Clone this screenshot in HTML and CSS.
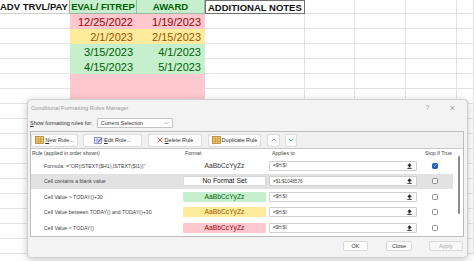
FILE: index.html
```html
<!DOCTYPE html>
<html lang="en">
<head>
    <meta charset="UTF-8">
    <meta name="viewport" content="width=device-width, initial-scale=1.0">
    <title>Conditional Formatting Rules Manager</title>
    <link rel="stylesheet" href="styles.css">
</head>
<body>
    <div class="sheet">
        <div class="row head">
            <div class="cell colA">ADV TRVL/PAY</div>
            <div class="cell hgreen">EVAL/ FITREP</div>
            <div class="cell hgreen">AWARD</div>
            <div class="cell notes">ADDITIONAL NOTES</div>
            <div class="cell"></div><div class="cell"></div><div class="cell"></div><div class="cell"></div>
        </div>
        <div class="row">
            <div class="cell colA"></div>
            <div class="cell date red">12/25/2022</div>
            <div class="cell date red">1/19/2023</div>
            <div class="cell"></div><div class="cell"></div><div class="cell"></div><div class="cell"></div><div class="cell"></div>
        </div>
        <div class="row">
            <div class="cell colA"></div>
            <div class="cell date yellow">2/1/2023</div>
            <div class="cell date yellow">2/15/2023</div>
            <div class="cell"></div><div class="cell"></div><div class="cell"></div><div class="cell"></div><div class="cell"></div>
        </div>
        <div class="row">
            <div class="cell colA"></div>
            <div class="cell date green">3/15/2023</div>
            <div class="cell date green">4/1/2023</div>
            <div class="cell"></div><div class="cell"></div><div class="cell"></div><div class="cell"></div><div class="cell"></div>
        </div>
        <div class="row">
            <div class="cell colA"></div>
            <div class="cell date green">4/15/2023</div>
            <div class="cell date green">5/1/2023</div>
            <div class="cell"></div><div class="cell"></div><div class="cell"></div><div class="cell"></div><div class="cell"></div>
        </div>
        <div class="row"><div class="cell colA"></div><div class="cell red"></div><div class="cell red"></div><div class="cell"></div><div class="cell"></div><div class="cell"></div><div class="cell"></div><div class="cell"></div></div>
        <div class="row"><div class="cell colA"></div><div class="cell red"></div><div class="cell red"></div><div class="cell"></div><div class="cell"></div><div class="cell"></div><div class="cell"></div><div class="cell"></div></div>
        <div class="row"><div class="cell colA"></div><div class="cell red"></div><div class="cell red"></div><div class="cell"></div><div class="cell"></div><div class="cell"></div><div class="cell"></div><div class="cell"></div></div>
        <div class="row"><div class="cell colA"></div><div class="cell red"></div><div class="cell red"></div><div class="cell"></div><div class="cell"></div><div class="cell"></div><div class="cell"></div><div class="cell"></div></div>
        <div class="row"><div class="cell colA"></div><div class="cell red"></div><div class="cell red"></div><div class="cell"></div><div class="cell"></div><div class="cell"></div><div class="cell"></div><div class="cell"></div></div>
        <div class="row"><div class="cell colA"></div><div class="cell red"></div><div class="cell red"></div><div class="cell"></div><div class="cell"></div><div class="cell"></div><div class="cell"></div><div class="cell"></div></div>
        <div class="row"><div class="cell colA"></div><div class="cell red"></div><div class="cell red"></div><div class="cell"></div><div class="cell"></div><div class="cell"></div><div class="cell"></div><div class="cell"></div></div>
        <div class="row"><div class="cell colA"></div><div class="cell red"></div><div class="cell red"></div><div class="cell"></div><div class="cell"></div><div class="cell"></div><div class="cell"></div><div class="cell"></div></div>
        <div class="row"><div class="cell colA"></div><div class="cell red"></div><div class="cell red"></div><div class="cell"></div><div class="cell"></div><div class="cell"></div><div class="cell"></div><div class="cell"></div></div>
        <div class="row"><div class="cell colA"></div><div class="cell red"></div><div class="cell red"></div><div class="cell"></div><div class="cell"></div><div class="cell"></div><div class="cell"></div><div class="cell"></div></div>
        <div class="row"><div class="cell colA"></div><div class="cell red"></div><div class="cell red"></div><div class="cell"></div><div class="cell"></div><div class="cell"></div><div class="cell"></div><div class="cell"></div></div>
        <div class="row"><div class="cell colA"></div><div class="cell red"></div><div class="cell red"></div><div class="cell"></div><div class="cell"></div><div class="cell"></div><div class="cell"></div><div class="cell"></div></div>
    </div>

    <div class="dialog">
        <div class="titlebar">
            <span class="title">Conditional Formatting Rules Manager</span>
            <span class="tbtn">?</span>
            <span class="tbtn close">&times;</span>
        </div>

        <div class="showrow">
            <span><u>S</u>how formatting rules for:</span>
            <div class="dropdown">
                <span>Current Selection</span>
                <svg width="5" height="4" viewBox="0 0 5 4"><path d="M0.5 1 L2.5 3 L4.5 1" fill="none" stroke="#9a9a9a" stroke-width="0.7"/></svg>
            </div>
        </div>

        <div class="panel">
            <div class="toolbar">
                <div class="tb-btn b-new">
                    <svg width="9" height="8" viewBox="0 0 9 8"><rect x="0.5" y="0.5" width="8" height="7" fill="#f6d27e" stroke="#b7832a" stroke-width="0.8"/><path d="M0.5 3 H8.5 M0.5 5.3 H8.5 M3.2 0.5 V7.5 M5.8 0.5 V7.5" stroke="#b7832a" stroke-width="0.6"/></svg>
                    <span><u>N</u>ew Rule...</span>
                </div>
                <div class="tb-btn b-edit">
                    <svg width="9" height="8" viewBox="0 0 9 8"><rect x="0.5" y="1.5" width="7" height="6" fill="#e9edf7" stroke="#6b74b5" stroke-width="0.7"/><path d="M0.5 4 H7.5 M3 1.5 V7.5" stroke="#6b74b5" stroke-width="0.5"/><path d="M3.5 6 L8 1.2 L8.8 2 L4.3 6.8 Z" fill="#7a4fc2"/></svg>
                    <span><u>E</u>dit Rule...</span>
                </div>
                <div class="tb-btn b-del">
                    <svg width="6" height="6" viewBox="0 0 6 6"><path d="M0.6 0.6 L5.4 5.4 M5.4 0.6 L0.6 5.4" stroke="#d9302b" stroke-width="0.9"/></svg>
                    <span><u>D</u>elete Rule</span>
                </div>
                <div class="tb-btn b-dup">
                    <svg width="9" height="8" viewBox="0 0 9 8"><rect x="0.5" y="0.5" width="8" height="7" fill="#f6d27e" stroke="#b7832a" stroke-width="0.8"/><path d="M0.5 3 H8.5 M0.5 5.3 H8.5 M3.2 0.5 V7.5 M5.8 0.5 V7.5" stroke="#b7832a" stroke-width="0.6"/></svg>
                    <span>Duplicate Rule</span>
                </div>
                <div class="tb-btn b-arrow">
                    <svg width="6" height="4" viewBox="0 0 6 4"><path d="M0.6 3.3 L3 1 L5.4 3.3" fill="none" stroke="#6f86a8" stroke-width="0.7"/></svg>
                </div>
                <div class="tb-btn b-arrow down">
                    <svg width="6" height="4" viewBox="0 0 6 4"><path d="M0.6 0.7 L3 3 L5.4 0.7" fill="none" stroke="#3f73c2" stroke-width="0.7"/></svg>
                </div>
            </div>

            <div class="listwrap">
                <div class="list">
                    <div class="listhead">
                        <span>Rule (applied in order shown)</span>
                        <span>Format</span>
                        <span class="applieshead">Applies to</span>
                        <span class="stophead">Stop If True</span>
                    </div>

                    <div class="rule">
                        <span class="ruletext">Formula: ="OR(ISTEXT($H1),ISTEXT($I1))"</span>
                        <div class="fmt">AaBbCcYyZz</div>
                        <div class="applies"><span>=$H:$I</span><svg width="5" height="6" viewBox="0 0 5 6"><path d="M2.5 0.3 L4.8 2.8 H3.4 V4.6 H1.6 V2.8 H0.2 Z" fill="#222"/><rect x="0.3" y="5.1" width="4.4" height="0.8" fill="#222"/></svg></div>
                        <div class="stop"><span class="check on"><svg width="5" height="5" viewBox="0 0 5 5"><path d="M1 2.6 L2.1 3.6 L4 1.3" fill="none" stroke="#fff" stroke-width="0.8"/></svg></span></div>
                    </div>
                    <div class="rule selected">
                        <span class="ruletext">Cell contains a blank value</span>
                        <div class="fmt nofmt">No Format Set</div>
                        <div class="applies"><span>=$1:$1048576</span><svg width="5" height="6" viewBox="0 0 5 6"><path d="M2.5 0.3 L4.8 2.8 H3.4 V4.6 H1.6 V2.8 H0.2 Z" fill="#222"/><rect x="0.3" y="5.1" width="4.4" height="0.8" fill="#222"/></svg></div>
                        <div class="stop"><span class="check"></span></div>
                    </div>
                    <div class="rule">
                        <span class="ruletext">Cell Value &gt; TODAY()+30</span>
                        <div class="fmt fgreen">AaBbCcYyZz</div>
                        <div class="applies"><span>=$H:$I</span><svg width="5" height="6" viewBox="0 0 5 6"><path d="M2.5 0.3 L4.8 2.8 H3.4 V4.6 H1.6 V2.8 H0.2 Z" fill="#222"/><rect x="0.3" y="5.1" width="4.4" height="0.8" fill="#222"/></svg></div>
                        <div class="stop"><span class="check"></span></div>
                    </div>
                    <div class="rule">
                        <span class="ruletext">Cell Value between TODAY() and TODAY()+30</span>
                        <div class="fmt fyellow">AaBbCcYyZz</div>
                        <div class="applies"><span>=$H:$I</span><svg width="5" height="6" viewBox="0 0 5 6"><path d="M2.5 0.3 L4.8 2.8 H3.4 V4.6 H1.6 V2.8 H0.2 Z" fill="#222"/><rect x="0.3" y="5.1" width="4.4" height="0.8" fill="#222"/></svg></div>
                        <div class="stop"><span class="check"></span></div>
                    </div>
                    <div class="rule">
                        <span class="ruletext">Cell Value &lt; TODAY()</span>
                        <div class="fmt fred">AaBbCcYyZz</div>
                        <div class="applies"><span>=$H:$I</span><svg width="5" height="6" viewBox="0 0 5 6"><path d="M2.5 0.3 L4.8 2.8 H3.4 V4.6 H1.6 V2.8 H0.2 Z" fill="#222"/><rect x="0.3" y="5.1" width="4.4" height="0.8" fill="#222"/></svg></div>
                        <div class="stop"><span class="check"></span></div>
                    </div>
                </div>
                <div class="scroll"><div class="thumb"></div></div>
            </div>
        </div>

        <div class="footer">
            <div class="fbtn b-ok">OK</div>
            <div class="fbtn b-close">Close</div>
            <div class="fbtn b-apply">Apply</div>
        </div>
    </div>
</body>
</html>
```

FILE: styles.css
```css
body {
    margin: 0;
    padding: 0;
    background-color: #ffffff;
    font-family: "Liberation Sans", Arial, sans-serif;
    overflow: hidden;
}

/* hoja de calculo */
.sheet {
    width: 474px;
}
.row {
    display: grid;
    grid-template-columns: 70px 67px 68px 100px 50px 51px 51px 17px;
    height: 15px;
}
.row.head {
    height: 14px;
}
.cell {
    box-sizing: border-box;
    border-right: 1px solid #e3e3e3;
    border-bottom: 1px solid #e3e3e3;
    overflow: hidden;
    white-space: nowrap;
}
.colA {
    border-right: none;
}
.head .cell {
    font-size: 9.5px;
    font-weight: bold;
    line-height: 13px;
}
.head .colA {
    color: #111;
    border-right: 1px solid #a8a8a8;
    border-bottom-color: #d0d0d0;
}
.hgreen {
    background-color: #c6efce;
    color: #006100;
    text-align: center;
    border-right: 1px solid #9db8a2 !important;
    border-bottom: 1px solid #9db8a2 !important;
}
.notes {
    color: #111;
    border: 1px solid #707070 !important;
    padding-left: 2px;
}
.date {
    font-size: 11px;
    line-height: 16px;
    text-align: right;
    padding-right: 3px;
}
.red {
    background-color: #ffc7ce;
    color: #9c0006;
    border-color: #ffc7ce;
}
.yellow {
    background-color: #ffeb9c;
    color: #9c5700;
    border-color: #ffeb9c;
}
.green {
    background-color: #c6efce;
    color: #006100;
    border-color: #c6efce;
}

/* dialogo */
.dialog {
    position: absolute;
    left: 27px;
    top: 99px;
    width: 441px;
    height: 159px;
    box-sizing: border-box;
    background-color: #f3f3f3;
    border: 1px solid #cfcfcf;
    border-radius: 4px;
    box-shadow: 0 2px 8px rgba(0, 0, 0, 0.22);
    font-size: 5.5px;
    color: #333;
}
.titlebar {
    display: flex;
    align-items: center;
    height: 15px;
    padding-left: 3px;
}
.title {
    flex: 1;
    color: #9a9a9a;
    font-size: 5.7px;
}
.tbtn {
    color: #9a9a9a;
    font-size: 6.5px;
    width: 25px;
    text-align: center;
}
.tbtn.close {
    font-size: 9px;
    margin-right: 2px;
}
.showrow {
    display: flex;
    align-items: center;
    gap: 4px;
    height: 16px;
    padding-left: 2px;
}
.dropdown {
    display: flex;
    align-items: center;
    justify-content: space-between;
    width: 76px;
    height: 10px;
    box-sizing: border-box;
    padding: 0 3px 0 3px;
    background-color: #fff;
    border: 1px solid #c4c4c4;
    border-radius: 1px;
}
.panel {
    margin-left: 2px;
    width: 434px;
    box-sizing: border-box;
    border: 1px solid #bdbdbd;
    background-color: #fff;
}
.toolbar {
    display: flex;
    align-items: center;
    height: 17px;
    box-sizing: border-box;
    background-color: #f0f0f0;
    border-bottom: 1px solid #c8c8c8;
}
.tb-btn {
    display: flex;
    align-items: center;
    justify-content: center;
    gap: 1px;
    height: 13px;
    box-sizing: border-box;
    background-color: #fcfcfc;
    border: 1px solid #dcdcdc;
    border-radius: 2px;
    color: #333;
}
.b-new { width: 47px; }
.b-edit { width: 59px; margin-left: 5px; }
.b-del { width: 54px; margin-left: 6px; gap: 2px; }
.b-dup { width: 53px; margin-left: 6px; }
.b-arrow { width: 13px; margin-left: 6px; }
.b-arrow.down { width: 12px; margin-left: 5px; }

.listwrap {
    display: flex;
}
.list {
    width: 422px;
}
.listhead {
    display: grid;
    grid-template-columns: 154px 86px 148px 34px;
    height: 9px;
    line-height: 9px;
    color: #444;
    font-size: 5.2px;
}
.listhead span:first-child {
    padding-left: 1px;
}
.applieshead {
    padding-left: 1px;
}
.stophead {
    padding-left: 6px;
}
.rule {
    display: grid;
    grid-template-columns: 152px 83px 148px 39px;
    column-gap: 0;
    align-items: center;
    height: 15.5px;
}
.rule .applies {
    margin-left: 3px;
}
.rule.selected {
    background-color: #e2e2e2;
}
.ruletext {
    padding-left: 13px;
    color: #444;
    font-size: 5.2px;
    white-space: nowrap;
}
.fmt {
    height: 10px;
    box-sizing: border-box;
    font-size: 6.7px;
    line-height: 10px;
    text-align: center;
    color: #333;
    border-radius: 1px;
}
.nofmt {
    background-color: #fff;
    border: 1px solid #d8d8d8;
    color: #111;
    font-size: 6.8px;
    line-height: 8px;
}
.fgreen {
    background-color: #c6efce;
    color: #006100;
}
.fyellow {
    background-color: #ffeb9c;
    color: #9c5700;
}
.fred {
    background-color: #ffc7ce;
    color: #9c0006;
}
.applies {
    display: flex;
    align-items: center;
    justify-content: space-between;
    width: 148px;
    height: 10px;
    box-sizing: border-box;
    padding: 0 4px 0 3px;
    background-color: #fff;
    border: 1px solid #cfcfcf;
    border-radius: 1px;
    font-size: 4.6px;
    color: #444;
}
.stop {
    display: flex;
    justify-content: center;
    padding-left: 3px;
}
.check {
    display: flex;
    align-items: center;
    justify-content: center;
    width: 6px;
    height: 6px;
    box-sizing: border-box;
    border: 0.8px solid #8c8c8c;
    border-radius: 1.5px;
    background-color: #fff;
}
.check.on {
    background-color: #1b5fc1;
    border-color: #1b5fc1;
}
.scroll {
    flex: 1;
    display: flex;
    justify-content: center;
}
.thumb {
    width: 2px;
    height: 58px;
    margin-top: 7px;
    margin-left: 1px;
    background-color: #8a8a8a;
    border-radius: 1px;
}

.footer {
    display: flex;
    justify-content: flex-end;
    padding: 4px 4px 0 0;
}
.fbtn {
    height: 10px;
    box-sizing: border-box;
    line-height: 8px;
    text-align: center;
    background-color: #fdfdfd;
    border: 1px solid #dadada;
    border-radius: 2px;
    color: #333;
}
.b-ok { width: 25px; }
.b-close { width: 26px; margin-left: 18px; }
.b-apply { width: 34px; margin-left: 17px; color: #aaa; background-color: #f7f7f7; }
```
